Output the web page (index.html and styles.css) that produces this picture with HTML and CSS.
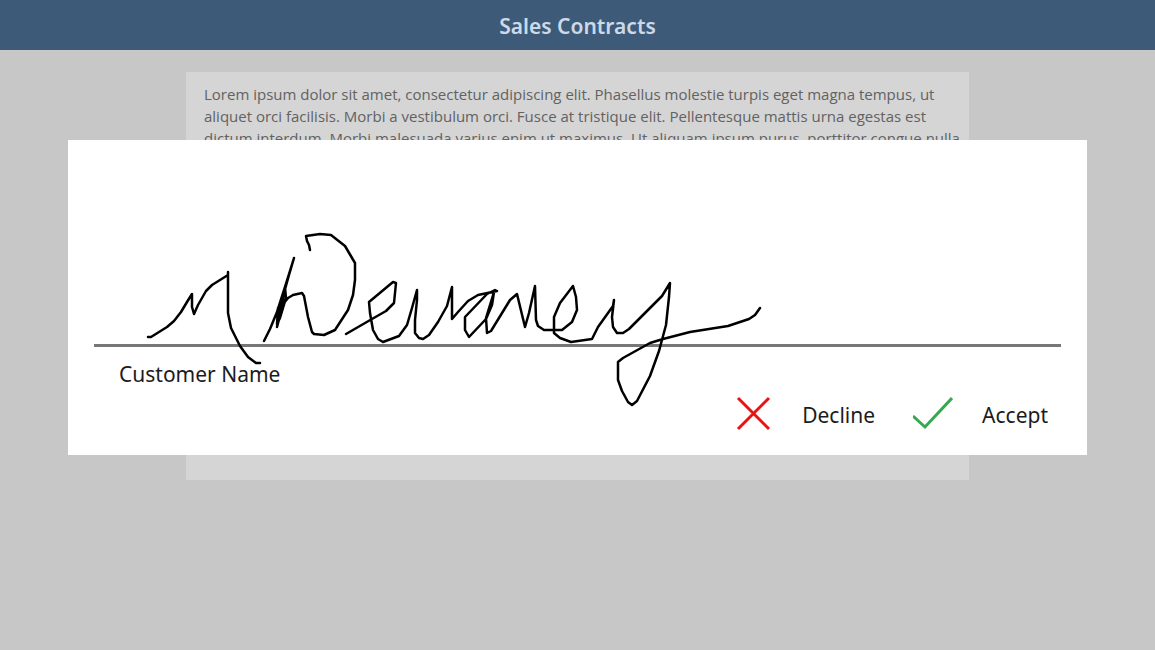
FILE: index.html
```
<!DOCTYPE html>
<html lang="en">
<head>
  <meta charset="UTF-8" />
  <meta name="viewport" content="width=device-width, initial-scale=1.0"/>
  <title>Sales Contracts</title>
  <link rel="stylesheet" href="styles.css">
</head>
<body>
  <header class="top-bar">
    <h1>Sales Contracts</h1>
  </header>

  <main class="contract">
    <p>Lorem ipsum dolor sit amet, consectetur adipiscing elit. Phasellus molestie turpis eget magna tempus, ut aliquet orci facilisis. Morbi a vestibulum orci. Fusce at tristique elit. Pellentesque mattis urna egestas est dictum interdum. Morbi malesuada varius enim ut maximus. Ut aliquam ipsum purus, porttitor congue nulla</p>
  </main>

  <!-- Signature dialog -->
  <div class="overlay">
    <div class="dialog" role="dialog" aria-labelledby="signer">
      <div class="pad">
        <svg class="signature" viewBox="146 232 616 176" role="img" aria-label="Signature">
          <path d="M148 337L151 337L167 327L174 321L181 312L187 302L192 294L192 307L194 314L198 305L206 291L212 285L228 275L228 272L228 313L231 328L240 346L248 357L256 363L260 363"/>
          <path d="M264 341L270 329L277 312L285 287L294 258L289 275L282 300L277 327L281 312L285 287L286 298L280 318L277 324L278 308L284 303L288 298L293 295L302 293L304 296L308 317L312 332L314 334L324 335L335 330L348 310L353 295L355 280L355 263L345 246L331 235L320 234L306 236L307 241L309 245L310 250"/>
          <path d="M346 334L372 319L386 311L394 303L396 283L393 282L369 302L370 313L373 330L378 339L383 342L399 336L407 325L412 308L417 290L417 300L415 320L415 333L419 338L423 339L429 335L438 322L447 306L452 287L452 319L458 312L468 301L478 295L497 291L495 290L487 294L465 317L465 330L469 337L486 319L492 305L494 292L486 318L487 333L491 331L510 300L517 294L525 327L529 313L535 286L536 320L538 326L544 330L562 330L572 322L577 310L576 297L573 286L560 303L554 317L554 333L560 338L571 342L592 339L598 327L613 306L614 300L612 317L613 327L617 333L623 333L629 329L662 296L670 283L669 297L666 325L659 351L650 376L637 401L632 405L628 402L622 391L618 380L618 362L623 358L650 343L663 339L690 332L728 326L749 319L755 315L760 308"/>
        </svg>
      </div>
      <div class="signer" id="signer">Customer Name</div>
      <div class="actions">
        <button type="button">
          <svg class="decline-icon" viewBox="0 0 40 40" aria-hidden="true"><path d="M5 3L36 34M36 3L5 34"/></svg>
          Decline
        </button>
        <button type="button">
          <svg class="accept-icon" viewBox="0 0 40 40" aria-hidden="true"><path d="M0 21L12 32L39 3"/></svg>
          Accept
        </button>
      </div>
    </div>
  </div>
</body>
</html>
```
FILE: styles.css
```
body {
  margin: 0;
  background: #c7c7c7;
  color: #1c1c1c;
  font-family: "Noto Sans", "Open Sans", sans-serif;
}

.top-bar {
  height: 50px;
  background: #3d5b78;
  color: #cdd9e6;
  text-align: center;
}

h1 {
  margin: 0;
  font-size: 21px;
  font-weight: 600;
  line-height: 52px;
}

.contract {
  box-sizing: border-box;
  max-width: 783px;
  min-height: 408px;
  margin: 22px auto;
  padding: 11px 5px 11px 18px;
  background: #d5d5d5;
}

.contract p {
  margin: 0;
  color: #626262;
  font-family: "Open Sans", sans-serif;
  font-size: 15px;
  line-height: 22px;
}

.overlay {
  position: fixed;
  inset: 0;
  padding: 140px 68px 0;
}

.dialog {
  padding: 0 26px 20px;
  background: #fff;
}

.pad {
  position: relative;
  height: 204px;
  border-bottom: 3px solid #777;
}

/* the stroke may run past the line */
.signature {
  position: absolute;
  top: 92px;
  left: 52px;
  width: 616px;
  height: 176px;
  fill: none;
  stroke: #000;
  stroke-width: 2.5;
  stroke-linecap: round;
  stroke-linejoin: round;
}

.signer {
  padding: 12px 25px 0;
  font-size: 21px;
  line-height: 30px;
}

.actions {
  display: flex;
  justify-content: flex-end;
  gap: 38px;
  padding: 6px 13px 0;
}

button {
  display: flex;
  align-items: center;
  gap: 29px;
  padding: 0;
  border: 0;
  background: none;
  color: inherit;
  font-family: inherit;
  font-size: 21px;
  line-height: 40px;
  cursor: pointer;
}

button svg {
  width: 40px;
  height: 40px;
  fill: none;
  stroke-width: 3;
}

.decline-icon {
  stroke: #e81313;
}

.accept-icon {
  stroke: #37a850;
}
```
